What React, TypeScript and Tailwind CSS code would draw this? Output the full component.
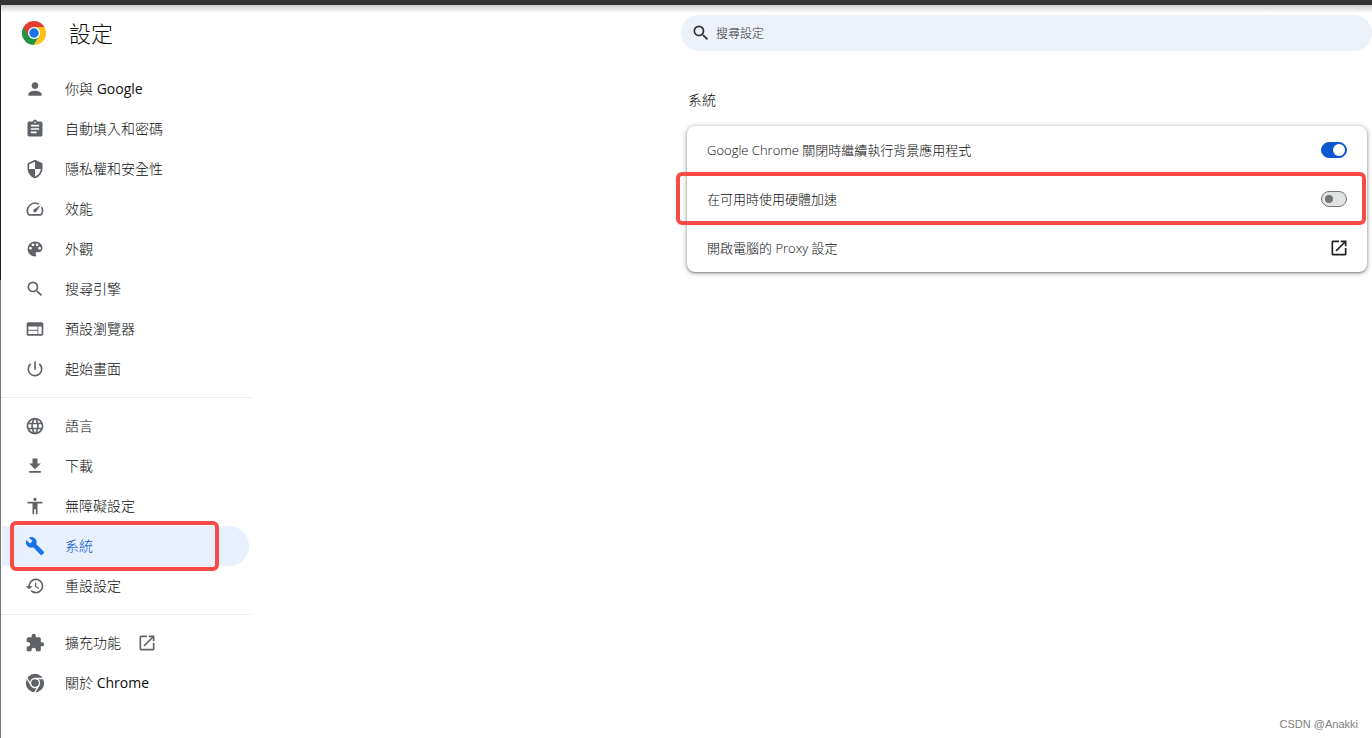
import { useState } from "react";
import type { ComponentType } from "react";
import clsx from "clsx";
import {
  MdPerson,
  MdAssignment,
  MdSecurity,
  MdSearch,
  MdWeb,
  MdPowerSettingsNew,
  MdLanguage,
  MdAccessibility,
  MdBuild,
  MdRestore,
  MdExtension,
  MdOpenInNew,
} from "react-icons/md";

type IconProps = { className?: string };

type NavItem = {
  id: string;
  label: string;
  icon: ComponentType<IconProps>;
  external?: boolean;
  marked?: boolean;
};

const SpeedIcon = ({ className }: IconProps) => (
  <svg viewBox="0 0 24 24" fill="currentColor" className={className}>
    <path d="M20.38 8.57l-1.23 1.85a8 8 0 0 1-.22 7.58H5.07A8 8 0 0 1 15.58 6.85l1.85-1.23A10 10 0 0 0 3.35 19a2 2 0 0 0 1.72 1h13.85a2 2 0 0 0 1.74-1 10 10 0 0 0-.27-10.44zm-9.79 6.84a2 2 0 0 0 2.83 0l5.66-8.49-8.49 5.66a2 2 0 0 0 0 2.83z" />
  </svg>
);

const PaletteIcon = ({ className }: IconProps) => (
  <svg viewBox="0 0 24 24" className={className}>
    <path
      d="M12 3a9 9 0 0 0 0 18c.9 0 1.5-.7 1.5-1.5 0-.4-.2-.8-.4-1.1-.2-.3-.4-.6-.4-1 0-.8.7-1.5 1.5-1.5H16a5 5 0 0 0 5-5C21 6.500 17 3 12 3z"
      fill="currentColor"
    />
    <g fill="#fff">
      <circle cx="6.500" cy="11" r="1.6" />
      <circle cx="9.500" cy="7" r="1.6" />
      <circle cx="14.500" cy="7" r="1.6" />
      <circle cx="17.500" cy="11" r="1.6" />
    </g>
  </svg>
);

const DownloadIcon = ({ className }: IconProps) => (
  <svg viewBox="0 0 24 24" fill="currentColor" className={className}>
    <path d="M19 9h-4V3H9v6H5l7 7 7-7zM5 18v2h14v-2H5z" />
  </svg>
);

const ChromeGrayIcon = ({ className }: IconProps) => (
  <svg viewBox="0 0 24 24" className={className}>
    <circle cx="12" cy="12" r="11" fill="currentColor" />
    <g stroke="#fff" strokeWidth="1.6" fill="none">
      <circle cx="12" cy="12" r="5.4" />
      <path d="M12 6.6H23M7.3 14.7L1.8 5.2M16.7 14.7L11.2 24" />
    </g>
  </svg>
);

const ChromeLogo = ({ className }: IconProps) => (
  <svg viewBox="0 0 48 48" className={className}>
    <path d="M24 24L3.2 12A24 24 0 0 0 24 48L34.4 30z" fill="#229342" />
    <path d="M24 24L34.4 30L24 48A24 24 0 0 0 44.8 12H24z" fill="#fbc116" />
    <path d="M3.2 12A24 24 0 0 1 44.8 12H24L13.6 30z" fill="#e33b2e" />
    <circle cx="24" cy="24" r="12" fill="#fff" />
    <circle cx="24" cy="24" r="9.5" fill="#1a73e8" />
  </svg>
);

const navGroups: NavItem[][] = [
  [
    { id: "people", label: "你與 Google", icon: MdPerson },
    { id: "autofill", label: "自動填入和密碼", icon: MdAssignment },
    { id: "privacy", label: "隱私權和安全性", icon: MdSecurity },
    { id: "performance", label: "效能", icon: SpeedIcon },
    { id: "appearance", label: "外觀", icon: PaletteIcon },
    { id: "search", label: "搜尋引擎", icon: MdSearch },
    { id: "browser", label: "預設瀏覽器", icon: MdWeb },
    { id: "startup", label: "起始畫面", icon: MdPowerSettingsNew },
  ],
  [
    { id: "languages", label: "語言", icon: MdLanguage },
    { id: "downloads", label: "下載", icon: DownloadIcon },
    { id: "accessibility", label: "無障礙設定", icon: MdAccessibility },
    { id: "system", label: "系統", icon: MdBuild, marked: true },
    { id: "reset", label: "重設設定", icon: MdRestore },
  ],
  [
    { id: "extensions", label: "擴充功能", icon: MdExtension, external: true },
    { id: "about", label: "關於 Chrome", icon: ChromeGrayIcon },
  ],
];

const Toggle = ({ id, checked, onChange }: { id: string; checked: boolean; onChange: () => void }) => (
  <input
    id={id}
    type="checkbox"
    role="switch"
    checked={checked}
    onChange={onChange}
    className="flex h-4 w-[26px] shrink-0 cursor-pointer appearance-none items-center rounded-full border border-[#747775] bg-[#e1e3e1] px-[3px] before:size-2 before:rounded-full before:bg-[#747775] checked:justify-end checked:border-[#0b57d0] checked:bg-[#0b57d0] checked:px-px checked:before:size-3 checked:before:bg-white"
  />
);

// Latin words are set heavier than the Chinese around them
const NavLabel = ({ text }: { text: string }) => {
  const [name, latin] = text.split(" ");
  return (
    <span className="font-light">
      {name}
      {latin && <span className="font-medium"> {latin}</span>}
    </span>
  );
};

const App = () => {
  const [active, setActive] = useState("system");
  const [background, setBackground] = useState(true);
  const [acceleration, setAcceleration] = useState(false);

  return (
    <div className="flex min-h-screen flex-col bg-white font-['Open_Sans','Noto_Sans_CJK_TC',sans-serif] text-[#0c0d0e]">
      <div className="h-[5px] bg-[#333]" />
      <div className="flex grow">
        {/* Window edge */}
        <div className="flex w-px shrink-0 flex-col">
          <div className="h-[275px] bg-[#222]" />
          <div className="grow bg-[#777]" />
        </div>

        <div className="flex grow flex-col">
          <div className="h-2 bg-linear-to-b from-[#ccc] to-white" />
          <div className="flex grow">
            <aside className="w-[250px] shrink-0">
              <header className="flex h-10 items-center gap-[23px] pl-[21px]">
                <ChromeLogo className="size-6" />
                <h1 className="text-[22px] leading-8 font-light">設定</h1>
              </header>

              <nav className="pt-4">
                {navGroups.map((group, i) => (
                  <ul key={i} className={clsx(i > 0 && "mt-2 border-t border-[#e8eaed] pt-2")}>
                    {group.map((item) => {
                      const Icon = item.icon;
                      const selected = item.id === active;
                      return (
                        <li key={item.id} className="relative pr-0.5 pl-px">
                          <a
                            href={`#${item.id}`}
                            onClick={() => setActive(item.id)}
                            className={clsx(
                              "flex h-10 items-center rounded-r-full pl-[23px] text-[14px] leading-5",
                              selected && "bg-[#e8f0fe] text-[#0b57d0]"
                            )}
                          >
                            <Icon
                              className={clsx(
                                "mr-5 size-5 shrink-0",
                                selected ? "text-[#1a73e8]" : "text-[#5f6368]"
                              )}
                            />
                            <NavLabel text={item.label} />
                            {item.external && <MdOpenInNew className="ml-4 size-5 text-[#5f6368]" />}
                          </a>
                          {item.marked && (
                            <div className="pointer-events-none absolute -inset-y-[5px] right-8 left-[9px] rounded-md border-4 border-[#f84b46]" />
                          )}
                        </li>
                      );
                    })}
                  </ul>
                ))}
              </nav>
            </aside>

            <main className="ml-auto flex w-full max-w-[691px] flex-col pt-0.5">
              <label className="flex h-9 items-center gap-[5px] rounded-full bg-[#ecf1fa] pl-[10px] text-[#303030]">
                <MdSearch className="size-5 shrink-0" />
                <input
                  type="search"
                  aria-label="搜尋設定"
                  placeholder="搜尋設定"
                  className="h-8 grow bg-transparent text-[12px] font-light outline-none placeholder:text-[#303030]"
                />
              </label>

              <section className="pt-[39px] pr-[5px] pl-1.5">
                <h2 className="pl-px text-[14px] leading-5 font-light">系統</h2>
                <div className="mt-4 rounded-lg text-[13px] leading-5 font-light shadow-[0_1px_2px_rgba(60,64,67,0.5),0_1px_5px_1px_rgba(60,64,67,0.3)]">
                  <label htmlFor="background" className="flex h-12 items-center justify-between px-5">
                    Google Chrome 關閉時繼續執行背景應用程式
                    <Toggle
                      id="background"
                      checked={background}
                      onChange={() => setBackground(!background)}
                    />
                  </label>
                  <div className="relative">
                    <label htmlFor="acceleration" className="flex h-[49px] items-center justify-between px-5">
                      在可用時使用硬體加速
                      <Toggle
                        id="acceleration"
                        checked={acceleration}
                        onChange={() => setAcceleration(!acceleration)}
                      />
                    </label>
                    <div className="pointer-events-none absolute -inset-y-0.5 right-px -left-[11px] rounded-md border-4 border-[#f84b46]" />
                  </div>
                  <a href="#proxy" className="flex h-[49px] items-center justify-between pr-[18px] pl-5">
                    開啟電腦的 Proxy 設定
                    <MdOpenInNew className="size-5 text-[#1f1f1f]" />
                  </a>
                </div>
              </section>

              <footer className="mt-auto pr-3.5 pb-1.5 text-right font-['Liberation_Sans',sans-serif] text-[11px] leading-4 text-[#808080]">
                CSDN @Anakki
              </footer>
            </main>
          </div>
        </div>
      </div>
    </div>
  );
};

export default App;
